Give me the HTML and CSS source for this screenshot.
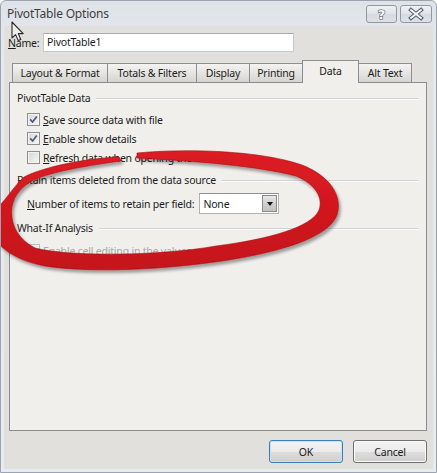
FILE: index.html
```html
<!DOCTYPE html>
<html lang="en">
<head>
    <meta charset="UTF-8">
    <meta name="viewport" content="width=device-width, initial-scale=1.0">
    <title>PivotTable Options</title>
    <link rel="stylesheet" href="styles.css">
</head>
<body>

    <div class="dialog">
        <div class="titlebar">
            <span class="title">PivotTable Options</span>
            <div class="caption-buttons">
                <button class="cap-btn">
                    <svg width="29" height="16" viewBox="0 0 29 16">
                        <text x="14.5" y="13" text-anchor="middle" class="help-glyph">?</text>
                    </svg>
                </button>
                <button class="cap-btn cap-close">
                    <svg width="30" height="16" viewBox="0 0 30 16">
                        <path d="M10 4 L20 12 M20 4 L10 12" stroke="#56606e" stroke-width="4" stroke-linecap="square" fill="none"/>
                        <path d="M10 4 L20 12 M20 4 L10 12" stroke="#f6f8fa" stroke-width="1.8" stroke-linecap="square" fill="none"/>
                    </svg>
                </button>
            </div>
        </div>

        <div class="client">
            <div class="name-row">
                <span class="name-label"><u>N</u>ame:</span>
                <div class="text-input">PivotTable1</div>
            </div>

            <div class="tabs">
                <div class="tab tab-layout">Layout &amp; Format</div>
                <div class="tab tab-totals">Totals &amp; Filters</div>
                <div class="tab tab-short">Display</div>
                <div class="tab tab-short">Printing</div>
                <div class="tab tab-data active">Data</div>
                <div class="tab tab-alt">Alt Text</div>
            </div>

            <div class="panel">
                <div class="group-title">PivotTable Data</div>
                <div class="check-row first">
                    <span class="checkbox"><svg width="9" height="9" viewBox="0 0 9 9"><path d="M1.2 4.4 L3.6 7 L7.8 1.4" class="tick"/></svg></span>
                    <span><u>S</u>ave source data with file</span>
                </div>
                <div class="check-row">
                    <span class="checkbox"><svg width="9" height="9" viewBox="0 0 9 9"><path d="M1.2 4.4 L3.6 7 L7.8 1.4" class="tick"/></svg></span>
                    <span><u>E</u>nable show details</span>
                </div>
                <div class="check-row">
                    <span class="checkbox"></span>
                    <span><u>R</u>efresh data when opening the file</span>
                </div>

                <div class="group-title after-checks">Retain items deleted from the data source</div>
                <div class="field-row">
                    <span><u>N</u>umber of items to retain per field:</span>
                    <div class="select">
                        <span>None</span>
                        <span class="select-arrow"></span>
                    </div>
                </div>

                <div class="group-title after-field">What-If Analysis</div>
                <div class="check-row disabled after-group">
                    <span class="checkbox"></span>
                    <span><u>E</u>nable cell editing in the values area</span>
                </div>
            </div>

            <div class="footer">
                <button class="btn btn-default">OK</button>
                <button class="btn">Cancel</button>
            </div>
        </div>

        <!-- mouse pointer left over the title -->
        <svg class="cursor" width="14" height="21" viewBox="0 0 14 21">
            <path d="M1 1 L1 17 L4.6 13.6 L7.2 19.6 L9.8 18.5 L7.3 12.6 L12.2 12.6 Z" fill="#eeeeee" fill-opacity="0.85" stroke="#2a2a2a" stroke-width="1.1" stroke-linejoin="round"/>
        </svg>

        <!-- red marker ellipse drawn over the dialog -->
        <svg class="annotation" width="437" height="473" viewBox="0 0 437 473">
            <defs>
                <filter id="ink-shadow" x="-10%" y="-20%" width="125%" height="150%">
                    <feDropShadow dx="2" dy="3" stdDeviation="1.6" flood-color="#000" flood-opacity="0.35"/>
                </filter>
                <linearGradient id="ink" x1="0" y1="0" x2="0" y2="1">
                    <stop offset="0" stop-color="#dc1d23"/>
                    <stop offset="1" stop-color="#c4121a"/>
                </linearGradient>
            </defs>
            <path filter="url(#ink-shadow)" fill="url(#ink)" stroke="#a80e13" stroke-width="0.6"
                  d="M137 153 C190 148 262 151 302 165 C330 176 343 196 337 215 C329 237 282 252 222 261
                     C160 270 90 273 45 266 C18 261 2 250 -8 236 L-8 214 C6 200 14 186 24 177
                     C45 166 90 158 119 157 L121 161 C90 165 50 172 34 180 C22 186 14 195 12 207
                     C10 222 16 238 35 248 C70 257 160 256 216 246
                     C270 239 312 227 319 210 C324 196 313 183 296 176 C258 166 196 161 137 158 Z"/>
        </svg>
    </div>

</body>
</html>
```

FILE: styles.css
```css
* {
    box-sizing: border-box;
}
body {
    margin: 0;
    background-color: #ffffff;
    font-family: "Noto Sans", "Open Sans", sans-serif;
    font-size: 10.5px;
    letter-spacing: -0.2px;
    color: #1b1b1b;
}
u {
    text-underline-offset: 1px;
}

/* window frame */
.dialog {
    position: relative;
    width: 437px;
    height: 473px;
    display: flex;
    flex-direction: column;
    background: linear-gradient(#dfe3e8, #e6e9ed 60px, #e9ebee);
    border: 1px solid #9ba5b1;
    border-radius: 6px 6px 0 0;
    overflow: hidden;
}
.titlebar {
    height: 25px;
    display: flex;
    align-items: center;
    justify-content: space-between;
    padding: 0 4px 0 6px;
}
.title {
    font-size: 12px;
    color: #3e3e3e;
}
.caption-buttons {
    display: flex;
    gap: 3px;
}
.cap-btn {
    width: 31px;
    height: 18px;
    padding: 0;
    border: 1px solid #8f98a4;
    border-radius: 3px;
    background: linear-gradient(#eff1f4, #dfe2e7 50%, #d6dae0 51%, #dde0e5);
    display: flex;
    align-items: center;
    justify-content: center;
}
.cap-close {
    width: 32px;
}
.help-glyph {
    font-family: "DejaVu Sans", sans-serif;
    font-size: 13px;
    font-weight: bold;
    fill: #f6f8fa;
    stroke: #56606e;
    stroke-width: 1.2px;
    paint-order: stroke;
}

/* client area */
.client {
    flex: 1;
    margin: 0 3px 3px;
    display: flex;
    flex-direction: column;
    background-color: #e2e0dc;
}
.name-row {
    display: flex;
    align-items: center;
    margin-top: 7px;
    padding-left: 4px;
}
.name-label {
    width: 35px;
}
.text-input {
    width: 251px;
    height: 19px;
    padding-left: 3px;
    line-height: 17px;
    background-color: #ffffff;
    border: 1px solid #c5c9cf;
    border-top-color: #a9adb3;
}

/* tabs */
.tabs {
    display: flex;
    align-items: flex-end;
    height: 23px;
    margin-top: 8px;
    padding-left: 8px;
}
.tab {
    height: 19px;
    margin-bottom: 1px;
    margin-right: -1px;
    display: flex;
    align-items: center;
    justify-content: center;
    border: 1px solid #8b8e95;
    border-bottom: none;
    background: linear-gradient(#f4f3f1, #e4e3e0 55%, #d6d4d0);
    color: #1b1b1b;
    font-size: 10.5px;
}
.tab-layout { width: 96px; }
.tab-totals { width: 90px; }
.tab-short { width: 54px; }
.tab-data { width: 57px; }
.tab-alt { width: 54px; }
.tab.active {
    position: relative;
    z-index: 1;
    height: 23px;
    margin-bottom: 0;
    padding-bottom: 2px;
    background: #f0efec;
}

/* tab page */
.panel {
    width: 418px;
    height: 349px;
    margin: -1px 0 0 5px;
    padding: 7px 8px 0 7px;
    border: 1px solid #898c95;
    background-color: #f0efec;
}
.group-title {
    display: flex;
    align-items: center;
    height: 16px;
    color: #1e1e1e;
}
.group-title::after {
    content: "";
    flex: 1;
    height: 1px;
    margin-left: 6px;
    background-color: #d3d3d3;
    box-shadow: 0 1px 0 #fbfbfb;
}
.group-title.after-checks { margin-top: 5px; }
.group-title.after-field { margin-top: 6px; }

.check-row {
    display: flex;
    align-items: center;
    gap: 3px;
    height: 19px;
    margin-left: 10px;
}
.check-row.first { margin-top: 4px; }
.check-row.after-group { margin-top: 5px; }
.checkbox {
    width: 13px;
    height: 13px;
    display: flex;
    align-items: center;
    justify-content: center;
    border: 1px solid #8e8f8f;
    background: linear-gradient(135deg, #d6d6d6, #f7f7f7);
    box-shadow: inset 0 0 0 1px #f2f2f2;
}
.tick {
    fill: none;
    stroke: #4b5a7c;
    stroke-width: 1.7;
}
.check-row.disabled {
    color: #a7a7a7;
}
.check-row.disabled .checkbox {
    border-color: #bdbdbd;
    background: #f3f3f3;
}

.field-row {
    display: flex;
    align-items: center;
    height: 21px;
    margin-top: 5px;
    margin-left: 10px;
}
.select {
    width: 80px;
    height: 21px;
    margin-left: 5px;
    padding-left: 3px;
    display: flex;
    align-items: center;
    justify-content: space-between;
    border: 1px solid #b2b2b2;
    border-top-color: #8f8f8f;
    background-color: #ffffff;
}
.select-arrow {
    width: 15px;
    height: 17px;
    margin-right: 1px;
    display: flex;
    align-items: center;
    justify-content: center;
    border: 1px solid #8a8a8a;
    background: linear-gradient(#e8e8e8, #cfcfcf 50%, #c2c2c2);
}
.select-arrow::after {
    content: "";
    border-left: 3.5px solid transparent;
    border-right: 3.5px solid transparent;
    border-top: 4px solid #111111;
}

/* buttons */
.footer {
    display: flex;
    justify-content: flex-end;
    gap: 10px;
    margin-top: 9px;
    padding-right: 6px;
}
.btn {
    width: 74px;
    height: 23px;
    padding: 0;
    border: 1px solid #707070;
    border-radius: 3px;
    background: linear-gradient(#f3f3f3, #ebebeb 50%, #dddddd 51%, #cfcfcf);
    box-shadow: inset 0 0 0 1px #fbfbfb;
    font-family: inherit;
    font-size: 10.5px;
    letter-spacing: inherit;
    color: #1b1b1b;
}
.btn-default {
    border-color: #3c7fb1;
    box-shadow: inset 0 0 0 1px #c2e4f6;
}

/* overlays */
.cursor {
    position: absolute;
    left: 10px;
    top: 20px;
}
.annotation {
    position: absolute;
    left: -1px;
    top: -1px;
    pointer-events: none;
}
```
